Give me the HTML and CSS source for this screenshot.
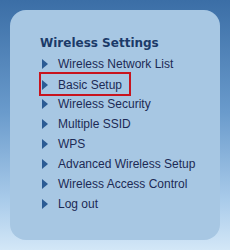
FILE: index.html
```html
<!DOCTYPE html>
<html lang="en">
<head>
    <meta charset="UTF-8">
    <title>Wireless Settings</title>
    <link rel="stylesheet" href="styles.css">
</head>
<body>
    <div class="panel">
        <h2 class="menu-title">Wireless Settings</h2>
        <ul class="menu">
            <li class="menu-item"><a href="#" class="menu-link"><span class="arrow"></span>Wireless Network List</a></li>
            <li class="menu-item"><a href="#" class="menu-link active"><span class="arrow"></span>Basic Setup</a></li>
            <li class="menu-item"><a href="#" class="menu-link"><span class="arrow"></span>Wireless Security</a></li>
            <li class="menu-item"><a href="#" class="menu-link"><span class="arrow"></span>Multiple SSID</a></li>
            <li class="menu-item"><a href="#" class="menu-link"><span class="arrow"></span>WPS</a></li>
            <li class="menu-item"><a href="#" class="menu-link"><span class="arrow"></span>Advanced Wireless Setup</a></li>
            <li class="menu-item"><a href="#" class="menu-link"><span class="arrow"></span>Wireless Access Control</a></li>
            <li class="menu-item"><a href="#" class="menu-link"><span class="arrow"></span>Log out</a></li>
        </ul>
    </div>
</body>
</html>
```

FILE: styles.css
```css
html, body {
    margin: 0;
    padding: 0;
    width: 230px;
    height: 250px;
}
body {
    padding: 10px;
    box-sizing: border-box;
    background: linear-gradient(to bottom, #3b6ea6 0%, #6a9bcc 45%, #a9cbea 80%, #d3e7f7 100%);
    font-family: "Liberation Sans", Arial, sans-serif;
}
.panel {
    height: 230px;
    box-sizing: border-box;
    padding: 23px 0 0 30px;
    background-color: #a7c7e3;
    border-radius: 16px;
}
.menu-title {
    margin: 0 0 1px;
    font-family: "DejaVu Sans", Verdana, sans-serif;
    font-size: 12px;
    font-weight: bold;
    line-height: 20px;
    color: #1b3a68;
}
.menu {
    list-style: none;
    margin: 0;
    padding: 0;
}
.menu-item {
    height: 20px;
    display: flex;
    align-items: center;
}
.menu-link {
    display: inline-flex;
    align-items: center;
    height: 20px;
    padding: 0 8px 0 2px;
    font-size: 12px;
    color: #1c2a55;
    text-decoration: none;
}
.menu-link.active {
    outline: 2px solid #c8141e;
    outline-offset: -1px;
    height: 22px;
    box-sizing: border-box;
    padding-top: 1px;
}
.arrow {
    width: 0;
    height: 0;
    margin-right: 10px;
    border-top: 5px solid transparent;
    border-bottom: 5px solid transparent;
    border-left: 6px solid #2b5b94;
}
```
